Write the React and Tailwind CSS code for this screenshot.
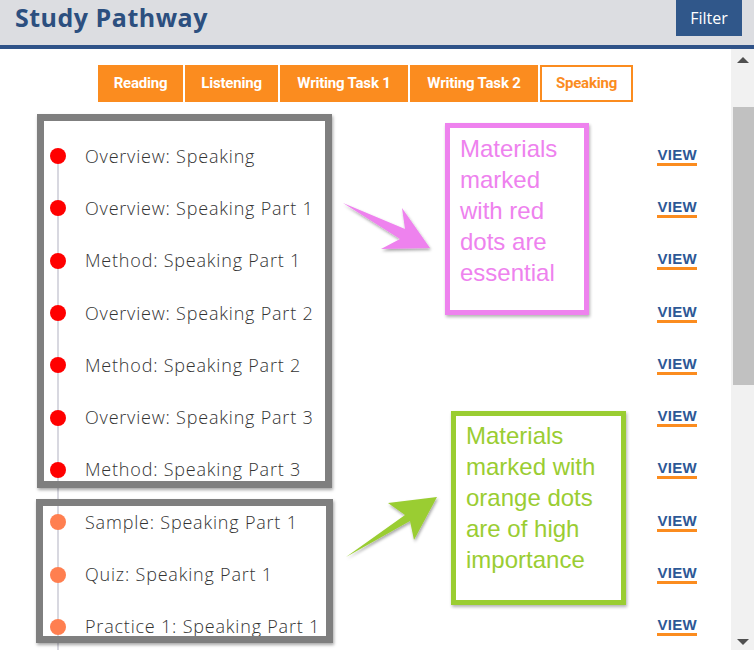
import React from 'react'

const tabs = [
  { label: 'Reading', w: 'w-[85px]' },
  { label: 'Listening', w: 'w-[93px]' },
  { label: 'Writing Task 1', w: 'w-[128px]' },
  { label: 'Writing Task 2', w: 'w-[128px]' },
  { label: 'Speaking', w: 'w-[93px]', active: true },
]

const items = [
  { title: 'Overview: Speaking', level: 'essential' },
  { title: 'Overview: Speaking Part 1', level: 'essential' },
  { title: 'Method: Speaking Part 1', level: 'essential' },
  { title: 'Overview: Speaking Part 2', level: 'essential' },
  { title: 'Method: Speaking Part 2', level: 'essential' },
  { title: 'Overview: Speaking Part 3', level: 'essential' },
  { title: 'Method: Speaking Part 3', level: 'essential' },
  { title: 'Sample: Speaking Part 1', level: 'high' },
  { title: 'Quiz: Speaking Part 1', level: 'high' },
  { title: 'Practice 1: Speaking Part 1', level: 'high' },
]

function Arrows() {
  return (
    <svg className="absolute left-0 top-0 pointer-events-none" width="754" height="650" viewBox="0 0 754 650">
      <defs>
        <filter id="sh" x="-20%" y="-20%" width="140%" height="140%">
          <feDropShadow dx="1" dy="2" stdDeviation="1.5" floodColor="#000" floodOpacity="0.35" />
        </filter>
      </defs>
      <path d="M343 203 L405 229 L402 208 L430 248 L381 249 L400 239 Z" fill="#ee82ee" filter="url(#sh)" />
      <path d="M346 557 L405 515 L388 503 L437 497 L414 540 L410 521 Z" fill="#9acd32" filter="url(#sh)" />
    </svg>
  )
}

export default function App() {
  return (
    <div className="relative w-[754px] h-[650px] overflow-hidden bg-white font-['Open_Sans',sans-serif]">
      {/* Header */}
      <div className="h-[49px] bg-[#dcdde1] border-b-4 border-[#2f5288] flex items-start justify-between">
        <h1 className="pl-[15px] text-[25px] font-bold text-[#2c4f7f] leading-[34px] tracking-[0.5px]">
          Study Pathway
        </h1>
        <button className="mr-[12px] w-[66px] h-[36px] bg-[#30578a] text-white text-[16px] leading-none">
          Filter
        </button>
      </div>

      <div className="flex h-[601px]">
        {/* Main */}
        <div className="relative flex-1">
          <div className="flex justify-center gap-[2px] pt-[16px]">
            {tabs.map((t) =>
              t.active ? (
                <div
                  key={t.label}
                  className={`${t.w} h-[37px] border-2 border-[#fb8c1f] bg-white text-[#fb8c1f] flex items-center justify-center font-['Roboto',sans-serif] font-bold text-[15px] tracking-[-0.2px]`}
                >
                  {t.label}
                </div>
              ) : (
                <div
                  key={t.label}
                  className={`${t.w} h-[37px] bg-[#fb8c1f] text-white flex items-center justify-center font-['Roboto',sans-serif] font-bold text-[15px] tracking-[-0.2px]`}
                >
                  {t.label}
                </div>
              )
            )}
          </div>

          <div className="relative mt-[28px]">
            <div className="absolute left-[57px] top-[20px] w-[2px] h-[600px] bg-[#d8d8e0]" />
            {items.map((it) => (
              <div key={it.title} className="relative flex items-center h-[52.3px]">
                <span
                  className={`ml-[50px] w-[16px] h-[16px] rounded-full ${it.level === 'essential' ? 'bg-[#ff0000]' : 'bg-[#ff7f50]'}`}
                />
                <span className="ml-[19px] text-[18px] font-light text-[#333] tracking-[0.8px]">{it.title}</span>
                <a className="ml-auto mr-[34px] font-['Liberation_Sans',sans-serif] font-bold text-[15px] leading-[16px] text-[#2d5896] border-b-[3px] border-[#fb8c1f] tracking-[0.3px]">
                  VIEW
                </a>
              </div>
            ))}
          </div>
        </div>

        {/* Scrollbar */}
        <div className="relative w-[23px] bg-[#f1f1f1] flex flex-col items-end">
          <div className="w-full h-[22px] flex items-center justify-center">
            <span className="w-0 h-0 border-l-[6px] border-r-[6px] border-b-[6px] border-l-transparent border-r-transparent border-b-[#505050]" />
          </div>
          <div className="mt-[36px] w-[21px] h-[278px] bg-[#c1c1c1]" />
          <div className="mt-auto w-full h-[16px] flex items-center justify-center">
            <span className="w-0 h-0 border-l-[6px] border-r-[6px] border-t-[6px] border-l-transparent border-r-transparent border-t-[#505050]" />
          </div>
        </div>
      </div>

      {/* Annotation frames */}
      <div className="absolute left-[37px] top-[114px] w-[295px] h-[374px] border-[7px] border-[#7f7f7f] shadow-[1px_2px_3px_rgba(0,0,0,0.35)] pointer-events-none" />
      <div className="absolute left-[36px] top-[499px] w-[297px] h-[144px] border-[7px] border-[#7f7f7f] shadow-[1px_2px_3px_rgba(0,0,0,0.35)] pointer-events-none" />

      <div className="absolute left-[445px] top-[123px] w-[144px] h-[192px] border-[5px] border-[#ee82ee] bg-white shadow-[1px_2px_3px_rgba(0,0,0,0.3)] pl-[10px] pt-[5px] font-['Liberation_Sans',sans-serif] text-[24px] leading-[31px] text-[#ee82ee]">
        Materials
        <br />
        marked
        <br />
        with red
        <br />
        dots are
        <br />
        essential
      </div>

      <div className="absolute left-[451px] top-[411px] w-[175px] h-[194px] border-[5px] border-[#9acd32] bg-white shadow-[1px_2px_3px_rgba(0,0,0,0.3)] pl-[10px] pt-[4px] font-['Liberation_Sans',sans-serif] text-[24px] leading-[31px] text-[#9acd32]">
        Materials
        <br />
        marked with
        <br />
        orange dots
        <br />
        are of high
        <br />
        importance
      </div>

      <Arrows />
    </div>
  )
}
